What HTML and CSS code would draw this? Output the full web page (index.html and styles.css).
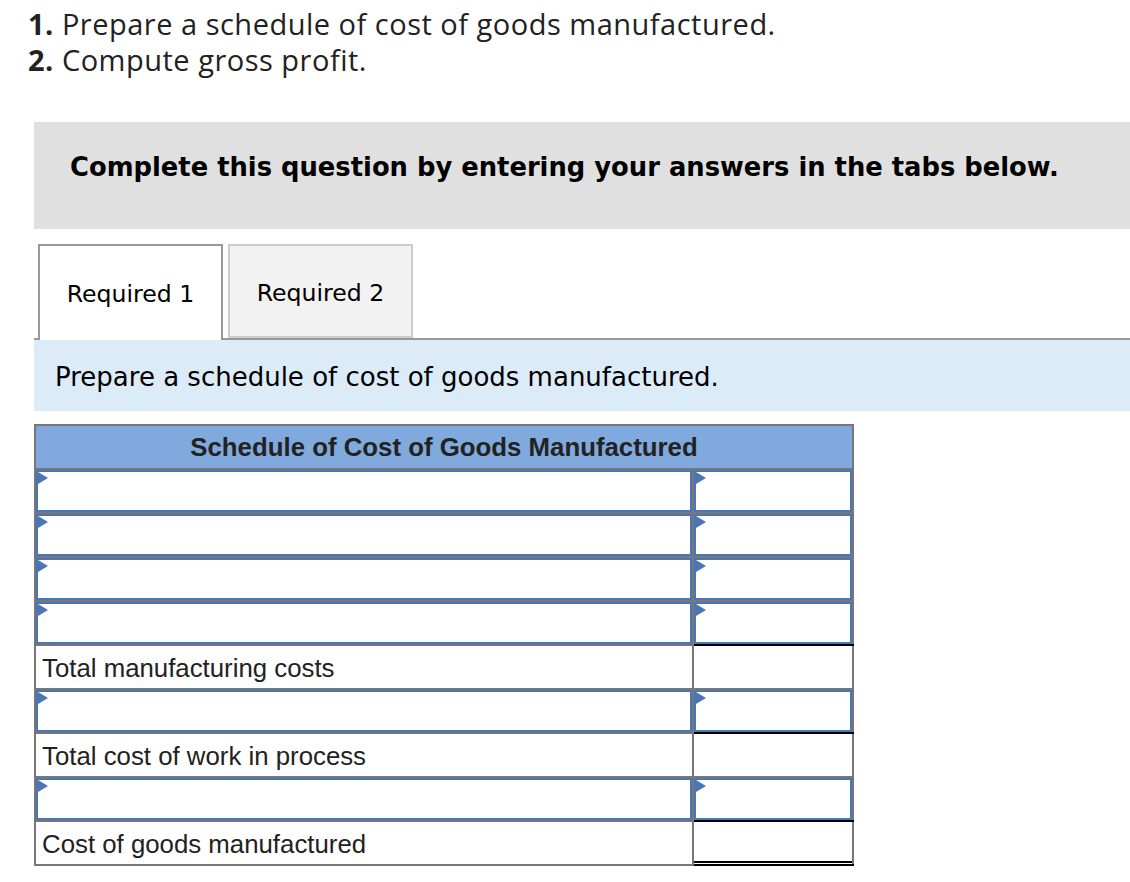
FILE: index.html
```html
<!DOCTYPE html>
<html lang="en">
<head>
<meta charset="utf-8">
<title>Schedule of Cost of Goods Manufactured</title>
<link rel="stylesheet" href="styles.css">
</head>
<body>
<div class="prompt">
  <div><b>1.</b> Prepare a schedule of cost of goods manufactured.</div>
  <div><b>2.</b> Compute gross profit.</div>
</div>
<div class="main">
  <div class="banner">Complete this question by entering your answers in the tabs below.</div>
  <div class="tabs">
    <div class="tab active">Required 1</div>
    <div class="tab">Required 2</div>
  </div>
  <div class="instr">Prepare a schedule of cost of goods manufactured.</div>
  <table class="sched">
    <colgroup><col class="c1"><col class="c2"></colgroup>
    <tr><th colspan="2">Schedule of Cost of Goods Manufactured</th></tr>
    <tr><td><div class="inp"></div></td><td><div class="inp"></div></td></tr>
    <tr><td><div class="inp"></div></td><td><div class="inp"></div></td></tr>
    <tr><td><div class="inp"></div></td><td><div class="inp"></div></td></tr>
    <tr><td><div class="inp"></div></td><td class="under"><div class="inp"></div></td></tr>
    <tr><td class="txt">Total manufacturing costs</td><td><div class="blank"></div></td></tr>
    <tr><td><div class="inp"></div></td><td class="under"><div class="inp"></div></td></tr>
    <tr><td class="txt">Total cost of work in process</td><td><div class="blank"></div></td></tr>
    <tr><td><div class="inp"></div></td><td class="under"><div class="inp"></div></td></tr>
    <tr><td class="txt">Cost of goods manufactured</td><td class="final"><div class="dbl"></div></td></tr>
  </table>
</div>
</body>
</html>
```
FILE: styles.css
```css
html, body {
  margin: 0;
  padding: 0;
  background: #fff;
}
.prompt {
  padding: 6px 0 0 28px;
  font-family: "Open Sans", Lato, sans-serif;
  font-size: 29px;
  letter-spacing: 0.5px;
  line-height: 36px;
  color: #222;
}
.prompt b {
  font-weight: 700;
}
.main {
  margin: 44px 0 0 34px;
}
.banner {
  box-sizing: border-box;
  height: 107px;
  padding: 0 0 17px 36px;
  background: #e0e0e0;
  display: flex;
  align-items: center;
  font-family: "DejaVu Sans", Verdana, sans-serif;
  font-weight: bold;
  font-size: 25.8px;
  color: #000;
}
.tabs {
  display: flex;
  gap: 5px;
  margin-top: 15px;
  padding-left: 4px;
  border-bottom: 2px solid #999;
  height: 94px;
}
.tab {
  width: 185px;
  box-sizing: border-box;
  height: 94px;
  padding-top: 4px;
  border: 2px solid #ccc;
  background: #f2f2f2;
  display: flex;
  align-items: center;
  justify-content: center;
  font-family: "DejaVu Sans", Verdana, sans-serif;
  font-size: 23.6px;
  color: #000;
}
.tab.active {
  background: #fff;
  border-color: #999;
  border-bottom: none;
  height: 96px;
  padding-bottom: 2px;
}
.instr {
  height: 71px;
  background: #dcebf8;
  display: flex;
  align-items: center;
  padding: 2px 0 0 21px;
  box-sizing: border-box;
  font-family: "DejaVu Sans", Verdana, sans-serif;
  font-size: 26px;
  color: #000;
}
.sched {
  margin-top: 13px;
  border-collapse: collapse;
  table-layout: fixed;
  width: 820px;
  border: 2px solid #777;
  font-family: "Liberation Sans", Arial, sans-serif;
}
.sched col.c1 {
  width: 658px;
}
.sched col.c2 {
  width: 160px;
}
.sched th {
  background: #80aade;
  height: 42px;
  padding: 0;
  border: 2px solid #777;
  font-size: 25.8px;
  font-weight: bold;
  color: #222;
  text-align: center;
}
.sched td {
  border: 2px solid #777;
  padding: 0;
  height: 42px;
  vertical-align: top;
}
.sched td.txt {
  vertical-align: middle;
  padding: 3px 0 0 6px;
  height: 39px;
  font-size: 25.8px;
  color: #222;
}
.sched td.under {
  border-bottom: 2px solid #000;
}
.sched td.final {
  border-bottom: 2px solid #000;
}
.inp {
  position: relative;
  box-sizing: border-box;
  height: 42px;
  border: 2px solid #4a76b6;
  background: #fff;
}
.inp::before {
  content: "";
  position: absolute;
  left: 0;
  top: 0;
  width: 0;
  height: 0;
  border-left: 10px solid #4a76b6;
  border-top: 6.5px solid transparent;
  border-bottom: 6.5px solid transparent;
}
.blank {
  height: 42px;
}
.dbl {
  box-sizing: border-box;
  height: 41px;
  border-bottom: 2px solid #000;
}
```
